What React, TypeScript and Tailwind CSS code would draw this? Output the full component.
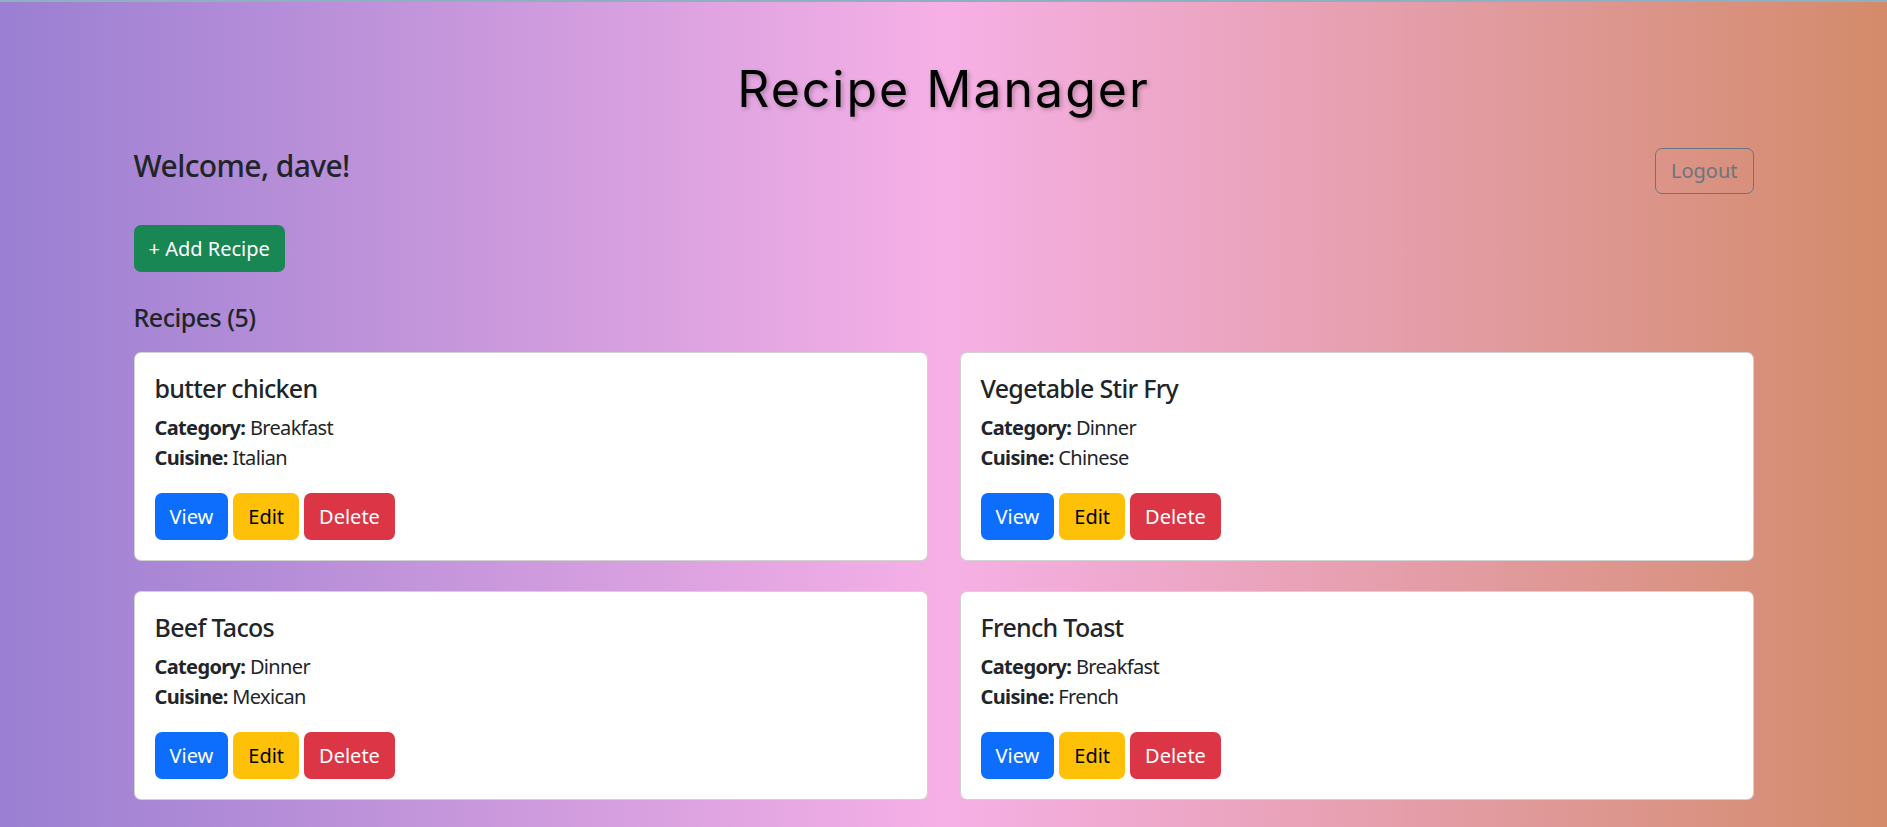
import React from "react";

type Recipe = { name: string; category: string; cuisine: string };

const recipes: Recipe[] = [
  { name: "butter chicken", category: "Breakfast", cuisine: "Italian" },
  { name: "Vegetable Stir Fry", category: "Dinner", cuisine: "Chinese" },
  { name: "Beef Tacos", category: "Dinner", cuisine: "Mexican" },
  { name: "French Toast", category: "Breakfast", cuisine: "French" },
];

function RecipeCard({ r }: { r: Recipe }) {
  return (
    <div className="bg-white border border-black/[0.175] rounded-[7px] p-5">
      <h5 className="text-[25px] leading-[30px] font-medium mb-[10px] tracking-[-0.028em]">{r.name}</h5>
      <p className="text-[20px] leading-[30px] mb-5 tracking-[-0.032em]">
        <strong className="font-bold">Category:</strong> {r.category}
        <br />
        <strong className="font-bold">Cuisine:</strong> {r.cuisine}
      </p>
      <div className="flex gap-[5px]">
        <button className="h-[47px] px-[15px] rounded-[7px] bg-[#0d6efd] text-white text-[20px]">View</button>
        <button className="h-[47px] px-[15px] rounded-[7px] bg-[#ffc107] text-black text-[20px]">Edit</button>
        <button className="h-[47px] px-[15px] rounded-[7px] bg-[#dc3545] text-white text-[20px]">Delete</button>
      </div>
    </div>
  );
}

export default function App() {
  return (
    <div className="min-h-screen border-t-2 border-[#8fb0c0] bg-[linear-gradient(to_right,#9a7fd2,#f6b0e6,#d38b6a)] text-[#212529] font-['Noto_Sans',sans-serif]">
      <div className="w-[1620px] mx-auto pt-[57px] pb-6">
        <h1 className="text-center text-[50px] leading-[60px] font-normal font-['Inter',sans-serif] tracking-[0.04em] text-black [text-shadow:2px_2px_4px_rgba(0,0,0,0.25)] mb-[29px]">
          Recipe Manager
        </h1>
        <div className="flex items-center justify-between mb-[31px]">
          <h4 className="text-[30px] leading-[36px] font-medium mb-[10px] tracking-[-0.02em]">Welcome, dave!</h4>
          <button className="h-[46px] px-[15px] rounded-[7px] border border-[#6c757d] text-[#6c757d] text-[20px]">Logout</button>
        </div>
        <button className="h-[47px] px-[15px] rounded-[7px] bg-[#198754] text-white text-[20px] mb-[30px]">+ Add Recipe</button>
        <h5 className="text-[25px] leading-[30px] font-medium mb-[20px] tracking-[-0.02em]">Recipes (5)</h5>
        <div className="grid grid-cols-2 gap-x-8 gap-y-[30px]">
          {recipes.map((r) => (
            <RecipeCard key={r.name} r={r} />
          ))}
        </div>
      </div>
    </div>
  );
}
